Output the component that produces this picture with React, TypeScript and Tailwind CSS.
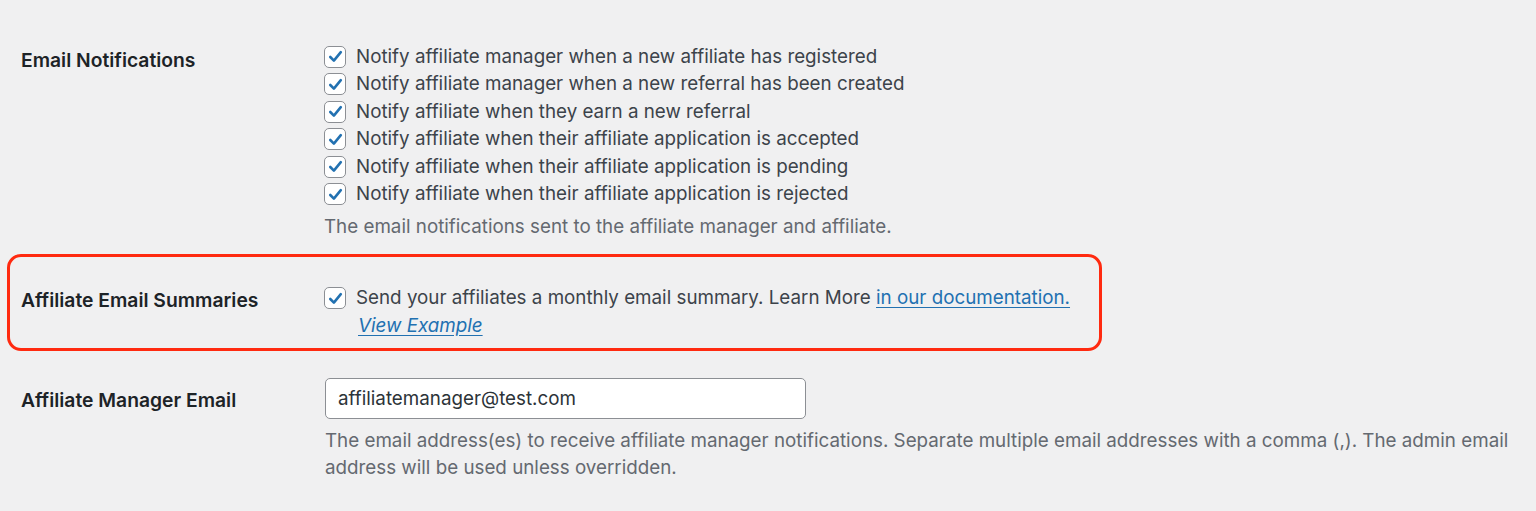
import { ReactNode } from "react";

function Check() {
  return (
    <span className="inline-flex h-[22px] w-[22px] shrink-0 items-center justify-center rounded-[5px] border border-[#8c8f94] bg-white">
      <svg viewBox="0 0 20 20" className="h-[19px] w-[19px]">
        <path d="M4.5 10.5 L8.3 14.3 L15.6 5.4" fill="none" stroke="#2271b1" strokeWidth="2.7" strokeLinecap="round" strokeLinejoin="round" />
      </svg>
    </span>
  );
}

function Option({ children }: { children: ReactNode }) {
  return (
    <label className="flex h-[27.5px] items-center gap-[10px]">
      <Check />
      <span>{children}</span>
    </label>
  );
}

const notifications = [
  "Notify affiliate manager when a new affiliate has registered",
  "Notify affiliate manager when a new referral has been created",
  "Notify affiliate when they earn a new referral",
  "Notify affiliate when their affiliate application is accepted",
  "Notify affiliate when their affiliate application is pending",
  "Notify affiliate when their affiliate application is rejected",
];

export default function App() {
  return (
    <div
      className="h-[511px] w-full overflow-hidden bg-[#f0f0f1] pl-[7px] text-[18.8px] text-[#3c434a]"
      style={{ fontFamily: "Inter, 'Noto Sans', sans-serif" }}
    >
      {/* email notifications */}
      <div className="flex pl-[14px] pt-[43px]">
        <div className="w-[303px] shrink-0 pt-[4px] text-[19.3px] font-semibold leading-[27.5px] text-[#1d2327]">Email Notifications</div>
        <div>
          {notifications.map((n) => (
            <Option key={n}>{n}</Option>
          ))}
          <p className="mt-[5px] leading-[27.5px] text-[#646970]">
            The email notifications sent to the affiliate manager and affiliate.
          </p>
        </div>
      </div>

      {/* highlighted row */}
      <div className="mt-[13px] flex w-[1095px] rounded-[14px] border-[3px] border-[#ff2a10] pb-[8px] pl-[11px] pt-[28px]">
        <div className="w-[303px] shrink-0 pt-[2px] text-[19.3px] font-semibold leading-[27.5px] text-[#1d2327]">Affiliate Email Summaries</div>
        <div>
          <Option>
            Send your affiliates a monthly email summary. Learn More{" "}
            <a href="#" className="text-[#2271b1] underline underline-offset-[3px]">in our documentation.</a>
          </Option>
          <div className="pl-[34px] leading-[28px]">
            <a href="#" className="italic text-[#2271b1] underline underline-offset-[3px]">View Example</a>
          </div>
        </div>
      </div>

      {/* manager email */}
      <div className="mt-[27px] flex pl-[14px]">
        <div className="w-[304px] shrink-0 pt-[9px] text-[19.3px] font-semibold leading-[27.5px] text-[#1d2327]">Affiliate Manager Email</div>
        <div>
          <input
            type="text"
            defaultValue="affiliatemanager@test.com"
            className="h-[41px] w-[481px] rounded-[5px] border border-[#8c8f94] bg-white px-[12px] text-[18.8px] text-[#2c3338] outline-none"
          />
          <p className="mt-[8px] max-w-[1200px] leading-[27px] text-[#646970]">
            The email address(es) to receive affiliate manager notifications. Separate multiple email addresses with a comma (,). The admin email address will be used unless overridden.
          </p>
        </div>
      </div>
    </div>
  );
}
